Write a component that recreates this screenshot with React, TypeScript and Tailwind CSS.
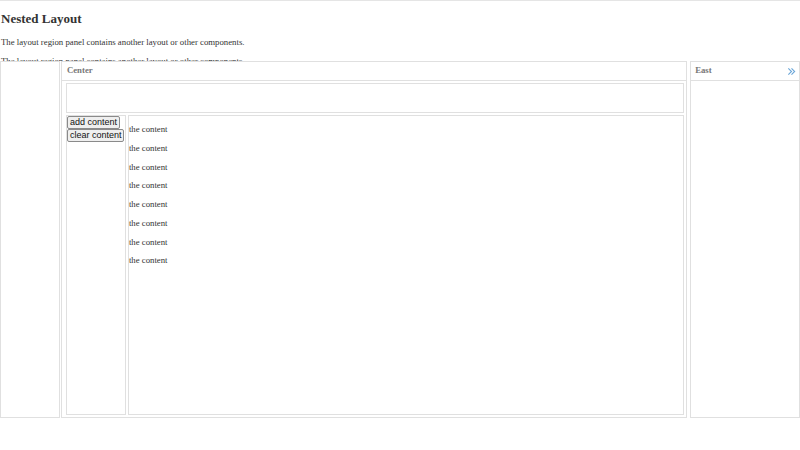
import React from "react";

const serif = { fontFamily: '"Liberation Serif", "Times New Roman", serif' };
const sans = { fontFamily: '"Liberation Sans", Arial, sans-serif' };

function DoubleRight() {
  return (
    <svg width="9" height="9" viewBox="0 0 10 10" fill="none">
      <path d="M1.5 1.5 L5 5 L1.5 8.5 M5 1.5 L8.5 5 L5 8.5" stroke="#6aa6d8" strokeWidth="1.2" />
    </svg>
  );
}

export default function App() {
  const items = Array.from({ length: 8 });
  return (
    <div className="w-[800px] h-[450px] bg-white text-[#333] overflow-hidden" style={serif}>
      <div className="border-t border-[#e5e5e5] flex flex-col">
        <h2 className="h-[32px] pt-[4px] leading-[28px] text-[13px] font-bold pl-[1px]">Nested Layout</h2>
        <p className="h-[19px] leading-[19px] text-[8.75px] pl-[1px]">
          The layout region panel contains another layout or other components.
        </p>
        <p className="h-[19px] leading-[19px] text-[8.75px] pl-[1px]">
          The layout region panel contains another layout or other components.
        </p>
        <div className="relative -mt-[10px] h-[357px] w-[800px] flex gap-[1px] bg-white">
          <div className="w-[60px] border border-[#e0e0e0] bg-white"></div>
          <div className="w-[627px] border border-[#e0e0e0] flex flex-col bg-white">
            <div className="h-[19px] border-b border-[#e0e0e0] flex items-center pl-[5px] text-[8.75px] font-bold text-[#777]">
              Center
            </div>
            <div className="flex-1 flex flex-col gap-[2px] pl-[4px] pr-[2px] pt-[2px] pb-[2px]">
              <div className="h-[30px] border border-[#e0e0e0]"></div>
              <div className="flex-1 flex gap-[2px]">
                <div className="w-[60px] border border-[#e0e0e0] flex flex-col items-start">
                  <button
                    className="text-[9px] leading-[11px] px-[2px] py-0 h-[13px] whitespace-nowrap border border-[#8a8a8a] bg-[#efefef] text-[#111] rounded-[2px]"
                    style={sans}
                  >
                    add content
                  </button>
                  <button
                    className="text-[9px] leading-[11px] px-[2px] py-0 h-[13px] whitespace-nowrap border border-[#8a8a8a] bg-[#efefef] text-[#111] rounded-[2px]"
                    style={sans}
                  >
                    clear content
                  </button>
                </div>
                <div className="flex-1 border border-[#e0e0e0] pt-[4px]">
                  {items.map((_, i) => (
                    <div key={i} className="h-[18.75px] leading-[18.75px] text-[8.75px]">
                      the content
                    </div>
                  ))}
                </div>
              </div>
            </div>
          </div>
          <div className="w-[1px]"></div>
          <div className="w-[110px] border border-[#e0e0e0] flex flex-col bg-white">
            <div className="h-[19px] border-b border-[#e0e0e0] flex items-center justify-between pl-[4px] pr-[3px] text-[8.75px] font-bold text-[#777]">
              <span>East</span>
              <DoubleRight />
            </div>
            <div className="flex-1"></div>
          </div>
        </div>
      </div>
    </div>
  );
}
